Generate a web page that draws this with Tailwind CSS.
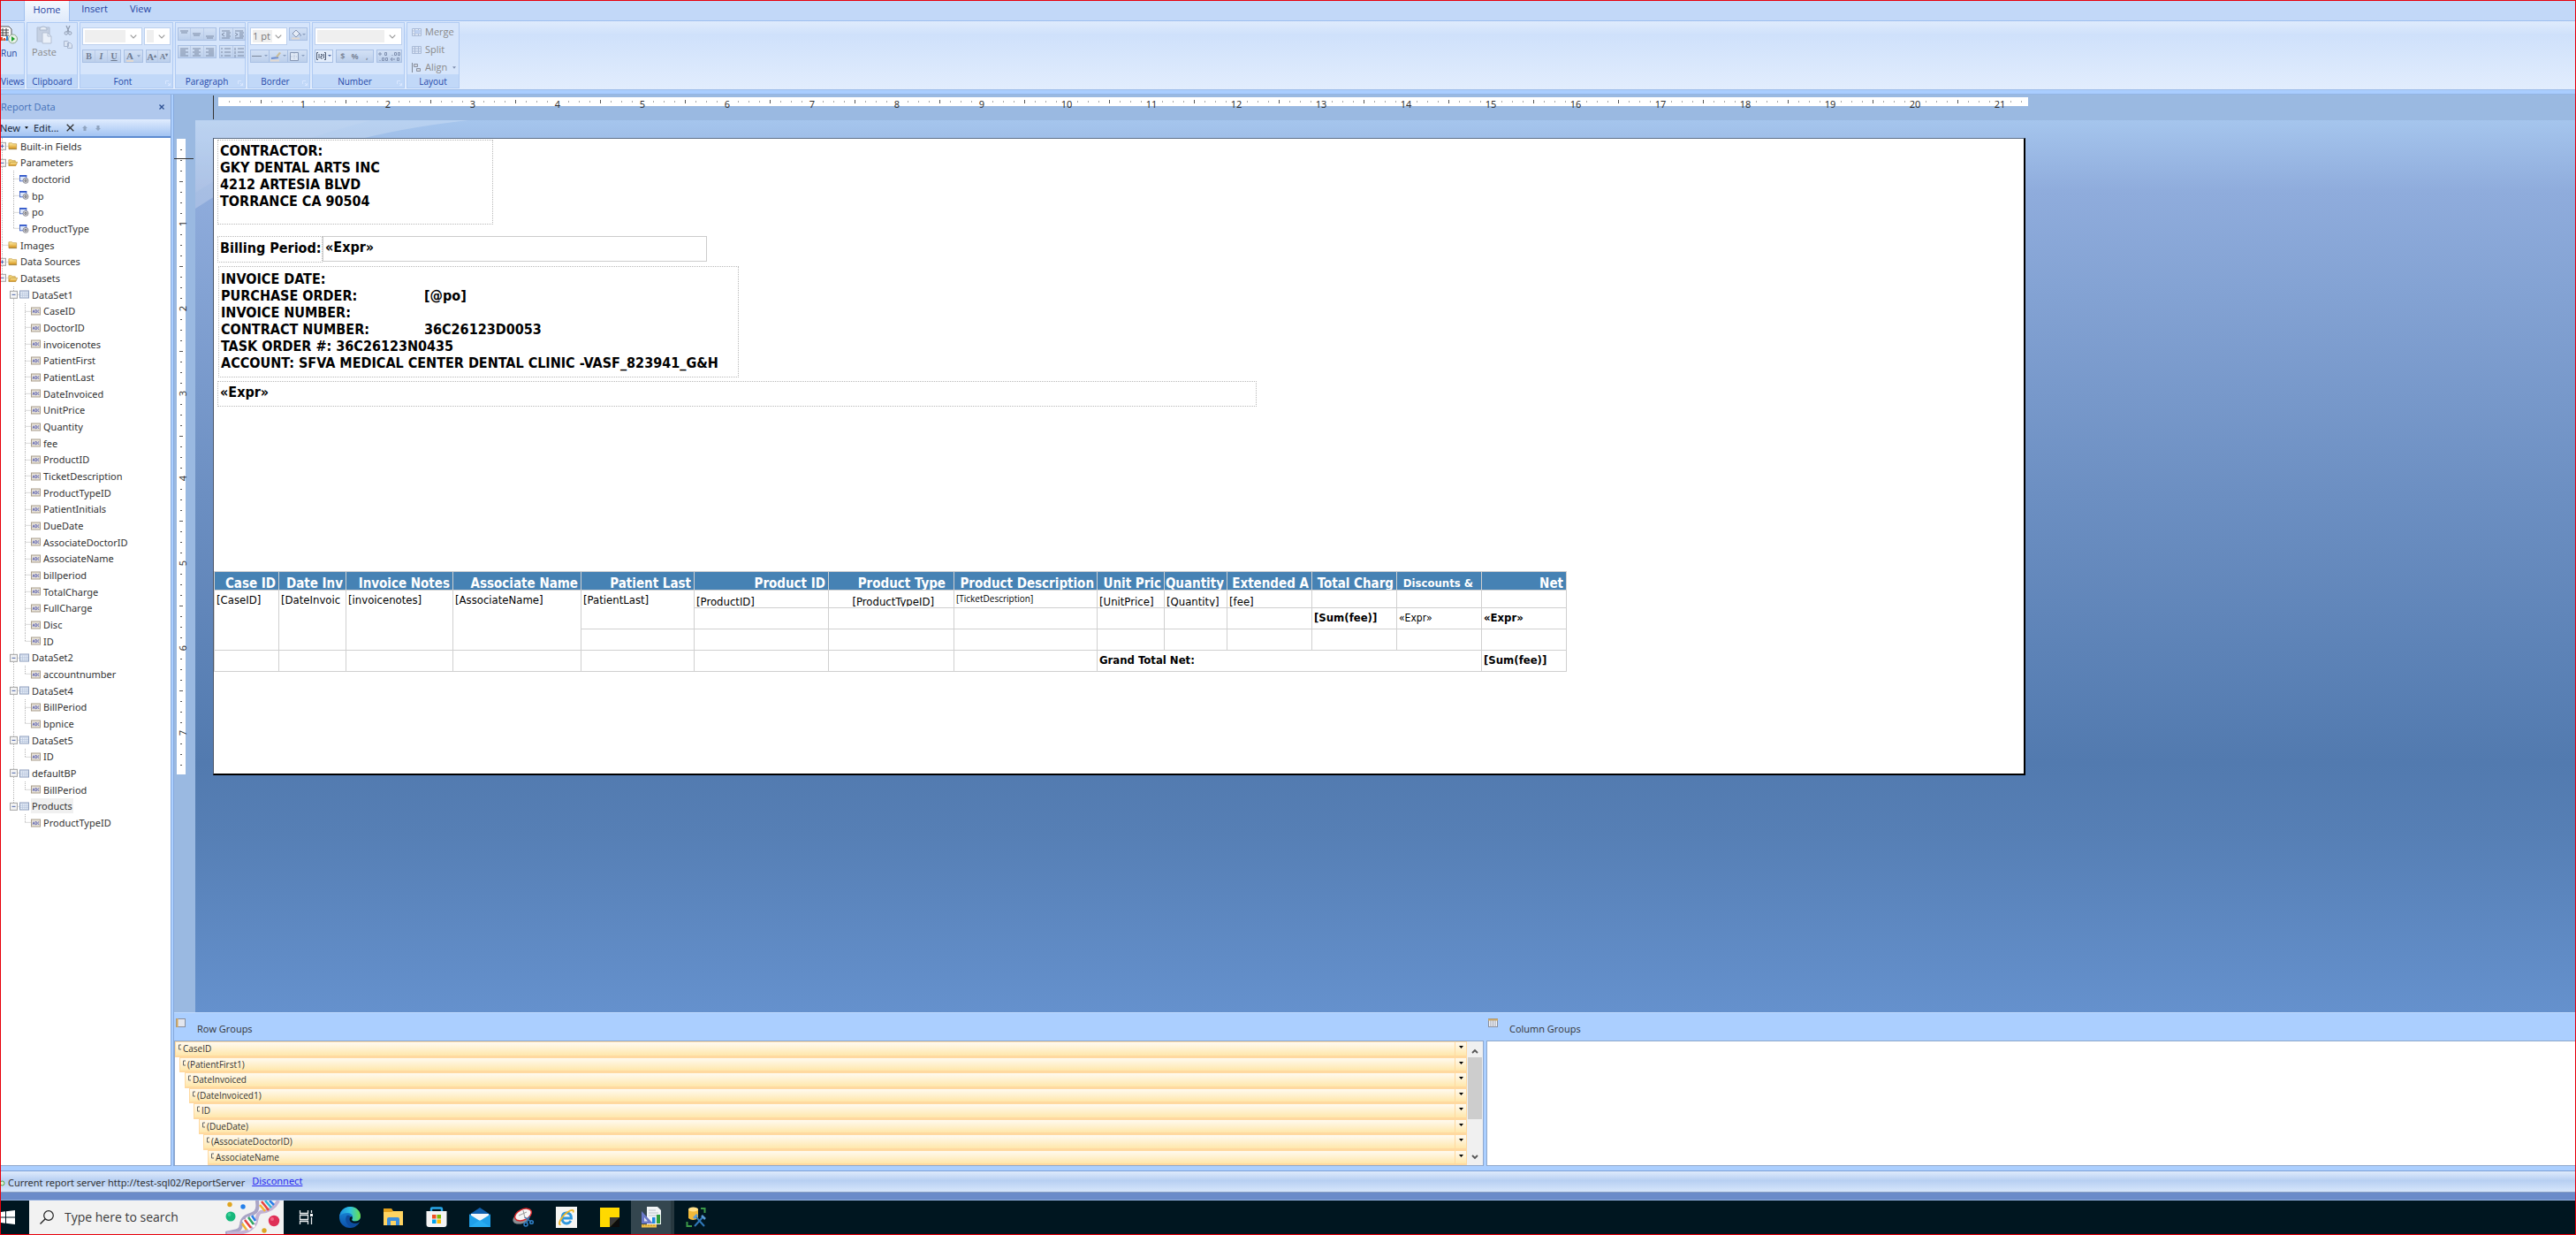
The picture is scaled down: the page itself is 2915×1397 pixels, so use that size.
<!DOCTYPE html>
<html lang="en">
<head>
    <meta charset="UTF-8">
    <meta name="viewport" content="width=device-width, initial-scale=1.0">
    <title>Report Builder</title>
    <script src="https://cdn.jsdelivr.net/npm/@tailwindcss/browser@4"></script>
</head>
<body class="h-screen flex flex-col overflow-hidden border border-red-600 bg-[#abcfff] font-['Noto_Sans','Open_Sans',sans-serif] text-[11px] leading-4 text-[#333]">

    <!-- shared icons -->
    <svg class="absolute w-0 h-0">
        <defs>
            <linearGradient id="gold" x1="0" y1="0" x2="0" y2="1"><stop offset="0" stop-color="#fff0a8"/><stop offset="1" stop-color="#d9971f"/></linearGradient>
            <linearGradient id="edgeA" x1="0" y1="0" x2="1" y2="0"><stop offset="0" stop-color="#1b8fe0"/><stop offset=".5" stop-color="#2fc3df"/><stop offset="1" stop-color="#6be04a"/></linearGradient>
            <linearGradient id="edgeB" x1="0" y1="0" x2="0" y2="1"><stop offset="0" stop-color="#1a92e0"/><stop offset="1" stop-color="#0c4fa8"/></linearGradient>
        </defs>
        <symbol id="i-folder" viewBox="0 0 12 10"><path d="M1 2.5V1.5h4l1 1h4.5v6H1z" fill="url(#gold)" stroke="#b98b2c" stroke-width=".7"/><path d="M1 9h10" stroke="#8b6a20" stroke-width=".8"/></symbol>
        <symbol id="i-open" viewBox="0 0 12 10"><path d="M1 8.5V1.5h3.5l1 1H9v2" fill="#f4d77c" stroke="#b98b2c" stroke-width=".7"/><path d="M1 8.8 3 4.3h8.6L9.6 8.8z" fill="url(#gold)" stroke="#b07f1e" stroke-width=".7"/></symbol>
        <symbol id="i-param" viewBox="0 0 12 11"><rect x=".5" y=".5" width="8" height="7" fill="#dfe9fb" stroke="#3f62c4"/><path d="M0 1h9" stroke="#2f55c8" stroke-width="2"/><circle cx="7.7" cy="7" r="3.3" fill="#d8d8dc" stroke="#70707a" stroke-width=".8"/><circle cx="7.7" cy="7" r="1.2" fill="none" stroke="#444" stroke-width=".8"/></symbol>
        <symbol id="i-set" viewBox="0 0 11 9"><rect x=".5" y=".5" width="10" height="8" fill="#e6edf7" stroke="#8b9cbb"/><path d="M.5 1.5h10M3.5 2v6M6 2v6M8.5 2v6M1 4h9M1 6h9" stroke="#b7c5dd" stroke-width=".7"/></symbol>
        <symbol id="i-field" viewBox="0 0 11 9"><rect x=".5" y=".5" width="10" height="8" fill="#e9e4da" stroke="#a99e8c"/><path d="M2 6.2l1-3 1 3M2.3 5.3h1.4M5 3v3.2h1q1-.2.9-1 0-.6-.7-.7.6-.2.5-.8Q6.500 3 6 3zM9.300 3.300q-1.500-.6-1.500 1.300t1.500 1.400" fill="none" stroke="#5a5fae" stroke-width=".8"/></symbol>
        <symbol id="i-caret" viewBox="0 0 8 5"><path d="M.7.7 4 4 7.300.7" fill="none" stroke="#9a9a9a" stroke-width="1.100"/></symbol>
        <symbol id="i-down" viewBox="0 0 5 3"><path d="M0 0h5L2.500 3z"/></symbol>
        <symbol id="i-launch" viewBox="0 0 6 6"><path d="M.5 4V.5H4M3 3l2.500 2.500M5.500 3v2.500H3" fill="none" stroke="#dbe9ff" stroke-width=".9"/></symbol>
    </svg>

    <!-- tabs -->
    <nav class="h-[23px] shrink-0 flex items-end bg-[#c2d8f8] text-[#1f3fa0] font-['Open_Sans',sans-serif]" role="tablist">
        <span class="w-[27px] h-full border-b border-r border-[#9fbfee]"></span>
        <button role="tab" aria-selected="true" class="w-[50px] h-full pb-[4px] bg-linear-to-b from-[#f4f8fe] to-[#e0ebfb]">Home</button>
        <button role="tab" class="w-[57px] h-full pb-[4px] border-b border-l border-[#9fbfee]">Insert</button>
        <button role="tab" class="w-[48px] h-full pb-[4px] border-b border-[#9fbfee]">View</button>
        <span class="flex-1 h-full border-b border-[#9fbfee]"></span>
    </nav>

    <!-- ribbon -->
    <div class="h-[78px] shrink-0 flex gap-[2px] pt-px pb-px bg-linear-to-b from-[#dfebfc] via-[#cfe1fb] via-20% to-[#e2edfd] border-b border-[#9dbce8] font-['Open_Sans',sans-serif]">
        <section class="w-[27px] flex flex-col border border-l-0 border-[#b0cbf3] bg-[#d6e5fb]">
            <button class="flex-1 flex flex-col items-start w-[19px] pt-[3px]">
                <svg class="w-[19px] h-[21px] shrink-0" viewBox="0 0 19 21"><path d="M-2 1H9l3 3v12H-2z" fill="#fff" stroke="#555"/><path d="M-1 5h10M-1 8h10M-1 11h10M2 3v9M6 3v9" stroke="#444"/><path d="M1 13v4M4 14v3" stroke="#e0552b" stroke-width="2"/><path d="M7 12v5" stroke="#2c86d8" stroke-width="2"/><circle cx="13.500" cy="15" r="5" fill="#eaf3ea" stroke="#8aa48a"/><path d="M12 12l4 3-4 3z" fill="#1f9e2c"/></svg>
                <span class="mt-[4px] text-[10px] leading-3 text-[#24479f]">Run</span>
            </button>
            <h2 class="pt-[2px] bg-[#c1d8f8] text-[#2447a8] text-[10px] leading-[13px]">Views</h2>
        </section>
        <section class="w-[58px] flex flex-col border border-[#b0cbf3] bg-[#d6e5fb]">
            <div class="flex-1 flex justify-between text-[#8a8a8a]">
                <button class="w-[38px] flex flex-col items-center pt-[3px]">
                    <svg class="w-[18px] h-[21px]" viewBox="0 0 18 21"><path d="M1 2h14v16H1z" fill="#c5d0e2" stroke="#b0bdd2"/><path d="M4 3q4-4 8 0v2H4z" fill="#e6ecf5" stroke="#a9b6cb"/><path d="M7 8h6l4 4v8H7z" fill="#eaf0f9" stroke="#b4c0d4"/><path d="M13 8v4h4" fill="none" stroke="#b4c0d4"/></svg>
                    <span class="mt-px">Paste</span>
                </button>
                <div class="flex flex-col gap-[6px] pt-[3px] pr-[5px]">
                    <button aria-label="Cut"><svg class="w-[10px] h-[11px]" viewBox="0 0 10 11"><path d="M3 0l3 7M7 0L4 7" stroke="#8d99ae" stroke-width="1.200"/><circle cx="2.800" cy="8.500" r="1.700" fill="none" stroke="#8d99ae"/><circle cx="7.200" cy="8.500" r="1.700" fill="none" stroke="#8d99ae"/></svg></button>
                    <button aria-label="Copy"><svg class="w-[10px] h-[9px]" viewBox="0 0 10 9"><path d="M.5.500h4l1 1v5h-5zM4.500 2.500h3l2 2v4h-5z" fill="#dbe5f4" stroke="#a8b6cf"/></svg></button>
                </div>
            </div>
            <h2 class="pt-[2px] bg-[#c1d8f8] text-[#2447a8] text-center text-[10px] leading-[13px]">Clipboard</h2>
        </section>
        <section class="w-[106px] flex flex-col border border-[#b0cbf3] bg-[#d6e5fb]">
            <div class="flex-1 px-[2px] pt-[5px] flex flex-col gap-[5px]">
                <div class="flex gap-[2px]">
                    <label class="w-[69px] h-[20px] p-[2px] flex items-center justify-between border border-[#bcd0ee] bg-white"><select aria-label="Font" class="appearance-none w-[46px] h-full bg-[#efefef]"></select><svg class="w-2 h-[5px] mr-[3px]"><use href="#i-caret"/></svg></label>
                    <label class="w-[30px] h-[20px] p-[2px] flex items-center justify-between border border-[#bcd0ee] bg-white"><select aria-label="Font size" class="appearance-none w-2 h-full bg-[#efefef]"></select><svg class="w-2 h-[5px] mr-[3px]"><use href="#i-caret"/></svg></label>
                </div>
                <div class="flex gap-[3px] font-['Liberation_Serif',serif] text-[#6f7b90] leading-3">
                    <div class="w-[45px] h-[15px] grid grid-cols-3 divide-x divide-[#b9cbe8] border border-[#a9c0e4] bg-linear-to-b from-[#d3e1f5] to-[#bccfeb] text-[10px]"><button class="font-bold">B</button><button class="italic font-bold">I</button><button class="underline font-bold">U</button></div>
                    <button class="w-[22px] h-[15px] flex items-center justify-around border border-[#a9c0e4] bg-linear-to-b from-[#d3e1f5] to-[#bccfeb]"><span class="border-b-2 border-[#e3d9cf] leading-[10px] font-bold">A</span><svg class="w-[4px] h-[3px] fill-[#8ba0c2]"><use href="#i-down"/></svg></button>
                    <div class="w-[29px] h-[15px] grid grid-cols-2 divide-x divide-[#b9cbe8] border border-[#a9c0e4] bg-linear-to-b from-[#d3e1f5] to-[#bccfeb] font-bold"><button class="text-[11px]">A<sup class="text-[6px]">▴</sup></button><button class="text-[9px]">A<sup class="text-[6px]">▾</sup></button></div>
                </div>
            </div>
            <h2 class="relative pt-[2px] pr-2 bg-[#c1d8f8] text-[#2447a8] text-center text-[10px] leading-[13px]">Font<svg class="absolute right-[2px] bottom-[2px] w-[6px] h-[6px]"><use href="#i-launch"/></svg></h2>
        </section>
        <section class="w-[80px] flex flex-col border border-[#b0cbf3] bg-[#d6e5fb]">
            <div class="flex-1 px-[2px] pt-[5px] grid grid-cols-[44px_30px] content-start gap-x-[3px] gap-y-[5px]" id="paragraph"></div>
            <h2 class="relative pt-[2px] pr-2 bg-[#c1d8f8] text-[#2447a8] text-center text-[10px] leading-[13px]">Paragraph<svg class="absolute right-[2px] bottom-[2px] w-[6px] h-[6px]"><use href="#i-launch"/></svg></h2>
        </section>
        <section class="w-[71px] flex flex-col border border-[#b0cbf3] bg-[#d6e5fb]">
            <div class="flex-1 px-[2px] pt-[5px] flex flex-col gap-[5px]">
                <div class="flex gap-[2px]">
                    <label class="w-[42px] h-[20px] p-[2px] flex items-center justify-between border border-[#bcd0ee] bg-white"><select aria-label="Border width" class="appearance-none w-[22px] h-full bg-[#efefef] text-[#777] leading-3"><option>1 pt</option></select><svg class="w-2 h-[5px] mr-[3px]"><use href="#i-caret"/></svg></label>
                    <button aria-label="Fill" class="w-[21px] h-[15px] border border-[#a9c0e4] bg-linear-to-b from-[#d3e1f5] to-[#bccfeb]"><svg class="w-[19px] h-[13px]" viewBox="0 0 19 13"><path d="M3 6l4-4 4 4-4 4z" fill="#e6edf7" stroke="#8696b3"/><path d="M11 6q2 1 1 3" fill="none" stroke="#7d90b5"/><path d="M2 11.500h9" stroke="#e3d9cf" stroke-width="2"/><path d="M14 6h4l-2 2z" fill="#8ba0c2"/></svg></button>
                </div>
                <div class="w-[65px] h-[15px] grid grid-cols-3 divide-x divide-[#a9c0e4] border border-[#a9c0e4] bg-linear-to-b from-[#d3e1f5] to-[#bccfeb]">
                    <button aria-label="Border style"><svg class="w-[20px] h-[13px]" viewBox="0 0 20 13"><path d="M1 6.500h11" stroke="#7d889b"/><path d="M15 5h4l-2 2z" fill="#8ba0c2"/></svg></button>
                    <button aria-label="Border color"><svg class="w-[20px] h-[13px]" viewBox="0 0 20 13"><path d="M2 9l8-1" stroke="#6f8fd0" stroke-width="2"/><path d="M7 7l4-5 2 1-4 5z" fill="#c9bd9a"/><path d="M1 11.500h10" stroke="#e3d9cf" stroke-width="2"/><path d="M15 5h4l-2 2z" fill="#8ba0c2"/></svg></button>
                    <button aria-label="Borders"><svg class="w-[20px] h-[13px]" viewBox="0 0 20 13"><path d="M2.500 2.500h9v9h-9z" fill="#dfe8f5" stroke="#8696b3"/><path d="M7 3v8M3 7h8" stroke="#b5c2d8" stroke-dasharray="1 1"/><path d="M15 5h4l-2 2z" fill="#8ba0c2"/></svg></button>
                </div>
            </div>
            <h2 class="relative pt-[2px] pr-2 bg-[#c1d8f8] text-[#2447a8] text-center text-[10px] leading-[13px]">Border<svg class="absolute right-[2px] bottom-[2px] w-[6px] h-[6px]"><use href="#i-launch"/></svg></h2>
        </section>
        <section class="w-[105px] flex flex-col border border-[#b0cbf3] bg-[#d6e5fb]">
            <div class="flex-1 px-[2px] pt-[5px] flex flex-col gap-[5px]">
                <label class="w-[99px] h-[20px] p-[2px] flex items-center justify-between border border-[#bcd0ee] bg-white"><select aria-label="Number format" class="appearance-none w-[76px] h-full bg-[#efefef]"></select><svg class="w-2 h-[5px] mr-[4px]"><use href="#i-caret"/></svg></label>
                <div class="flex gap-[3px] text-[9px] leading-3 text-[#7d889b] font-bold">
                    <button aria-label="Placeholder" class="w-[21px] h-[15px] border border-[#a9c0e4] bg-[#e3edfb]"><svg class="w-[19px] h-[13px]" viewBox="0 0 19 13"><path d="M3 2.500H1.500v8H3M10 2.500h1.500v8H10M4 4v5M6 4.500h1.500v2H6V9h2M9.500 4v5" fill="none" stroke="#4c5a72"/><path d="M14 5h4l-2 2z" fill="#4c66a0"/></svg></button>
                    <div class="w-[43px] h-[15px] grid grid-cols-3 border border-[#a9c0e4] bg-linear-to-b from-[#d3e1f5] to-[#bccfeb]"><button>$</button><button>%</button><button>,</button></div>
                    <div class="w-[29px] h-[15px] grid grid-cols-2 items-center border border-[#a9c0e4] bg-linear-to-b from-[#d3e1f5] to-[#bccfeb]"><button aria-label="Increase decimals"><svg class="w-[13px] h-[12px]" viewBox="0 0 13 12"><path d="M1 3h4M3 1v4M8.500 1.500h2v3h-2zM5.500 7.500h2v3h-2zM9.500 7.500h2v3h-2zM3 10v1" fill="none" stroke="#8090b0"/></svg></button><button aria-label="Decrease decimals"><svg class="w-[13px] h-[12px]" viewBox="0 0 13 12"><path d="M5.500 1.500h2v3h-2zM9.500 1.500h2v3h-2zM3 4v1M8.500 7.500h2v3h-2zM1 9h5M3 7L1 9l2 2" fill="none" stroke="#8090b0"/></svg></button></div>
                </div>
            </div>
            <h2 class="relative pt-[2px] pr-2 bg-[#c1d8f8] text-[#2447a8] text-center text-[10px] leading-[13px]">Number<svg class="absolute right-[2px] bottom-[2px] w-[6px] h-[6px]"><use href="#i-launch"/></svg></h2>
        </section>
        <section class="w-[60px] flex flex-col border border-[#b0cbf3] bg-[#d6e5fb]">
            <div class="flex-1 pl-[5px] pt-[2px] flex flex-col gap-1 items-start text-[#8a8a8a]">
                <button class="flex items-center gap-1"><svg class="w-[11px] h-[9px]" viewBox="0 0 11 9"><path d="M.5.500h10v8H.5zM.5 3h10M.5 6h10M3.500 0v9M7.500 0v9" fill="#e6edf8" stroke="#a9bad6"/><path d="M3.500 2h6v4h-6z" fill="#bdd0f0"/></svg>Merge</button>
                <button class="flex items-center gap-1"><svg class="w-[11px] h-[9px]" viewBox="0 0 11 9"><path d="M.5.500h10v8H.5zM.5 3h10M.5 6h10M3.500 0v9M7.500 0v9" fill="#dbe6f8" stroke="#a9bad6"/></svg>Split</button>
                <button class="flex items-center gap-1"><svg class="w-[11px] h-[11px]" viewBox="0 0 11 11"><path d="M.5 0v11" stroke="#7f8896"/><path d="M2.500 1.500h4v3h-4zM5.500 6.500h4v3h-4z" fill="#cfd5df" stroke="#8b93a2"/></svg>Align<svg class="w-[4px] h-[3px] ml-[2px] fill-[#8090b0]"><use href="#i-down"/></svg></button>
            </div>
            <h2 class="pt-[2px] bg-[#c1d8f8] text-[#2447a8] text-center text-[10px] leading-[13px]">Layout</h2>
        </section>
    </div>
    <div class="h-[5px] shrink-0 bg-[#a9cdff] border-b border-[#93b5e4]"></div>

    <main class="flex-1 min-h-0 flex pb-[5px]">
        <!-- report data -->
        <aside class="w-[192px] shrink-0 flex flex-col bg-white border-b border-[#8fa8cc]">
            <header class="h-[28px] flex items-center justify-between pr-[7px] bg-[#b0c8ed] text-[#4470b8] font-['Open_Sans',sans-serif]">
                <h1>Report Data</h1>
                <button aria-label="Close"><svg class="w-[6px] h-[6px]" viewBox="0 0 6 6"><path d="M.5.500l5 5M5.500.500l-5 5" stroke="#2c4f92" stroke-width="1.300"/></svg></button>
            </header>
            <div class="h-[21px] flex items-center border-b-2 border-[#5d8bd0] bg-linear-to-b from-[#e0ecfe] to-[#a2c3f2] text-[#1c2b40]">
                <button class="flex items-center gap-[5px] -ml-px">New<svg class="w-[4px] h-[3px]"><use href="#i-down"/></svg></button>
                <button class="ml-[6px]">Edit...</button>
                <button aria-label="Delete" class="ml-[8px]"><svg class="w-[9px] h-[9px]" viewBox="0 0 9 9"><path d="M.7.700l7.600 7.600M8.300.700L.7 8.300" stroke="#333" stroke-width="1.300"/></svg></button>
                <button aria-label="Move up" class="ml-[9px]"><svg class="w-[6px] h-[6px]" viewBox="0 0 6 6"><path d="M3 0l3 3H4.500v3h-3V3H0z" fill="#8fa3bf"/></svg></button>
                <button aria-label="Move down" class="ml-[9px]"><svg class="w-[6px] h-[6px]" viewBox="0 0 6 6"><path d="M3 6l3-3H4.500V0h-3v3H0z" fill="#8fa3bf"/></svg></button>
            </div>
            <ul id="tree" class="h-[784px] grid grid-rows-[repeat(42,minmax(0,1fr))]"></ul>
        </aside>
        <div class="w-[4px] shrink-0 border-x border-[#86a9dc] bg-[#abcfff]"></div>

        <div class="flex-1 min-w-0 flex flex-col">
            <!-- design surface -->
            <div class="flex-1 min-h-0 flex flex-col bg-[#9ab9e1]">
                <div class="h-[29px] shrink-0 pl-[50px] pt-[3px]"><svg id="hruler" class="w-[2048px] h-[10px] bg-white overflow-visible text-[11px] fill-[#333]"></svg></div>
                <div class="flex-1 min-h-0 flex">
                    <div class="w-[24px] shrink-0 pt-[21px] pl-[3px]"><svg id="vruler" class="w-[10px] h-[719px] bg-white overflow-visible text-[11px] fill-[#333]"></svg></div>
                    <div class="relative flex-1 min-w-0 overflow-hidden pt-[20px] pl-[20px] bg-[linear-gradient(180deg,#a5c5ed_0%,#8facdc_8%,#6c8fc2_42%,#527aaf_72%,#567fb5_80%,#6591cd_100%)]">
                        <svg class="absolute left-0 top-0 w-[320px] h-[110px]" viewBox="0 0 320 110"><path d="M0 0H310Q120 20 0 100z" fill="#fff" fill-opacity=".22"/><path d="M0 0H200Q80 30 0 82z" fill="#fff" fill-opacity=".06"/></svg>
                        <article class="relative w-[2051px] h-[721px] border-t border-l border-r-2 border-b-2 border-t-[#5c6f88] border-l-[#4a5568] border-r-black border-b-black bg-white text-black text-[16px] leading-[19px] font-bold font-['DejaVu_Sans_Condensed','DejaVu_Sans',sans-serif]">
                            <div class="ml-[4px] mt-px w-[312px] h-[96px] pl-[2px] pt-[2px] border border-dotted border-[#b8b8b8]">
                                CONTRACTOR:<br>GKY DENTAL ARTS INC<br>4212 ARTESIA BLVD<br>TORRANCE CA 90504
                            </div>
                            <div class="ml-[4px] mt-[13px] flex items-start">
                                <div class="w-[119px] h-[30px] pl-[2px] pt-[3px] border border-dotted border-[#b8b8b8] whitespace-nowrap">Billing Period:</div>
                                <div class="w-[435px] h-[29px] pl-[2px] pt-[2px] border border-[#cccccc]">«Expr»</div>
                            </div>
                            <div class="ml-[5px] mt-[4px] w-[589px] h-[126px] pl-[2px] pt-[4px] border border-dotted border-[#b8b8b8] whitespace-nowrap">
                                <p>INVOICE DATE:</p>
                                <p class="flex"><span class="w-[230px]">PURCHASE ORDER:</span>[@po]</p>
                                <p>INVOICE NUMBER:</p>
                                <p class="flex"><span class="w-[230px]">CONTRACT NUMBER:</span>36C26123D0053</p>
                                <p>TASK ORDER #: 36C26123N0435</p>
                                <p>ACCOUNT: SFVA MEDICAL CENTER DENTAL CLINIC -VASF_823941_G&amp;H</p>
                            </div>
                            <div class="ml-[4px] mt-[4px] w-[1176px] h-[29px] pl-[2px] pt-[2px] border border-dotted border-[#b8b8b8]">«Expr»</div>

                            <table class="mt-[186px] w-[1531px] table-fixed border-collapse text-[13px] leading-4 font-normal whitespace-nowrap [&_td]:border [&_td]:border-[#d0d0d0] [&_td]:p-0 [&_td]:pl-[2px] [&_td]:align-top [&_td]:overflow-hidden [&_th]:border [&_th]:border-[#d0d0d0] [&_th]:p-0 [&_th]:text-right">
                                <colgroup>
                                    <col class="w-[73px]"><col class="w-[76px]"><col class="w-[121px]"><col class="w-[145px]"><col class="w-[128px]"><col class="w-[152px]"><col class="w-[142px]"><col class="w-[162px]"><col class="w-[76px]"><col class="w-[71px]"><col class="w-[96px]"><col class="w-[96px]"><col class="w-[96px]"><col class="w-[96px]">
                                </colgroup>
                                <thead>
                                    <tr id="heads" class="h-[21px] bg-[#4682b4] text-white text-[15px]"></tr>
                                </thead>
                                <tbody>
                                    <tr class="h-[20px]">
                                        <td rowspan="3"><div class="pt-[3px]">[CaseID]</div></td>
                                        <td rowspan="3"><div class="pt-[3px] mr-[3px] overflow-hidden">[DateInvoic</div></td>
                                        <td rowspan="3"><div class="pt-[3px]">[invoicenotes]</div></td>
                                        <td rowspan="3"><div class="pt-[3px]">[AssociateName]</div></td>
                                        <td rowspan="2"><div class="pt-[3px]">[PatientLast]</div></td>
                                        <td><div class="h-[13px] mt-[5px] overflow-hidden leading-[15px]">[ProductID]</div></td>
                                        <td><div class="h-[13px] mt-[5px] overflow-hidden leading-[15px] text-right pr-[22px]">[ProductTypeID]</div></td>
                                        <td><div class="h-[17px] pt-[2px] text-[10px] leading-[15px] font-['Open_Sans',sans-serif]">[TicketDescription]</div></td>
                                        <td><div class="h-[13px] mt-[5px] overflow-hidden leading-[15px]">[UnitPrice]</div></td>
                                        <td><div class="h-[13px] mt-[5px] overflow-hidden leading-[15px]">[Quantity]</div></td>
                                        <td><div class="h-[13px] mt-[5px] overflow-hidden leading-[15px]">[fee]</div></td>
                                        <td></td><td></td><td></td>
                                    </tr>
                                    <tr class="h-[24px]">
                                        <td></td><td></td><td></td><td></td><td></td><td></td>
                                        <td class="font-bold"><div class="pt-[3px]">[Sum(fee)]</div></td>
                                        <td class="text-[12px]"><div class="pt-[3px]">«Expr»</div></td>
                                        <td class="font-bold"><div class="pt-[3px]">«Expr»</div></td>
                                    </tr>
                                    <tr class="h-[24px]"><td></td><td></td><td></td><td></td><td></td><td></td><td></td><td></td><td></td><td></td></tr>
                                    <tr class="h-[24px]">
                                        <td></td><td></td><td></td><td></td><td></td><td></td><td></td><td></td>
                                        <td colspan="5" class="font-bold"><div class="pt-[3px]">Grand Total Net:</div></td>
                                        <td class="font-bold"><div class="pt-[3px]">[Sum(fee)]</div></td>
                                    </tr>
                                </tbody>
                            </table>
                        </article>
                    </div>
                </div>
            </div>

            <!-- grouping pane -->
            <div class="h-[174px] shrink-0 flex gap-[3px] border-t border-[#c0dbff] font-['Open_Sans',sans-serif]">
                <section class="w-[1482px] shrink-0 flex flex-col">
                    <header class="h-[31px] flex items-center gap-[13px] pl-[2px] text-[#333]"><svg class="w-[11px] h-[10px] -mt-[10px]" viewBox="0 0 11 10"><rect x=".5" y=".5" width="10" height="9" fill="#e3e6ee" stroke="#8a8f9c"/><path d="M1.500 0v10" stroke="#d0a860" stroke-width="2"/></svg><h2 class="pt-[5px]">Row Groups</h2></header>
                    <div class="flex-1 min-h-0 flex border border-[#8fa8cc] bg-white">
                        <ul id="groups" class="flex-1 h-full overflow-hidden grid auto-rows-[minmax(0,1fr)] text-[10px] leading-3"></ul>
                        <div class="w-[18px] flex flex-col items-center bg-[#f0f0f0]">
                            <svg class="w-[8px] h-[18px]" viewBox="0 0 8 18"><path d="M1 13l3-3 3 3" fill="none" stroke="#555" stroke-width="1.800"/></svg>
                            <div class="w-[16px] h-[70px] bg-[#cdcdcd]"></div>
                            <svg class="w-[8px] h-[18px] mt-auto" viewBox="0 0 8 18"><path d="M1 7l3 3 3-3" fill="none" stroke="#555" stroke-width="1.800"/></svg>
                        </div>
                    </div>
                </section>
                <section class="flex-1 flex flex-col">
                    <header class="h-[31px] flex items-center gap-[13px] pl-[2px] text-[#333]"><svg class="w-[11px] h-[10px] -mt-[10px]" viewBox="0 0 11 10"><rect x=".5" y=".5" width="10" height="9" fill="#f3f4f8" stroke="#8a8f9c"/><path d="M0 1.500h11" stroke="#d0a860" stroke-width="2"/><path d="M3 2v8M5.500 2v8M8 2v8" stroke="#9aa0ae"/></svg><h2 class="pt-[5px]">Column Groups</h2></header>
                    <div class="flex-1 border border-r-0 border-[#8fa8cc] bg-white"></div>
                </section>
            </div>
        </div>
    </main>

    <footer class="h-[25px] shrink-0 flex items-center border-y border-t-[#7da0d6] border-b-[#8aa0c4] bg-linear-to-b from-[#dfebfc] via-[#b7cff2] via-45% to-[#d6e6fb]">
        <svg class="w-[5px] h-[7px] mt-1" viewBox="0 0 5 7"><circle cx="1.500" cy="3.500" r="2.500" fill="#d9efd2" stroke="#4f9c4a"/></svg>
        <span class="ml-[3px] pt-[2px]">Current report server http://test-sql02/ReportServer</span>
        <a href="#" class="ml-[8px] -mt-[2px] underline text-[#2a2af0]">Disconnect</a>
    </footer>
    <div class="h-[9px] shrink-0 bg-[#6a8bc9] border-b border-[#93afe0]"></div>

    <!-- taskbar -->
    <div class="h-[38px] shrink-0 flex bg-[#001620]">
        <button aria-label="Start" class="w-[32px]"><svg class="w-[16px] h-[16px]" viewBox="0 0 16 16"><path d="M0 2l5-.7v6.200H0zM6 1.200L16 0v7.500H6zM0 8.500h5v6.200L0 14zM6 8.500h10V16l-10-1.200z" fill="#fff"/></svg></button>
        <label class="w-[288px] flex items-center bg-[#f2f2f2] pl-3 font-['Open_Sans',sans-serif]">
            <svg class="w-[16px] h-[16px]" viewBox="0 0 16 16"><circle cx="10" cy="6" r="5.300" fill="none" stroke="#222" stroke-width="1.200"/><path d="M6.200 9.800L.5 15.500" stroke="#222" stroke-width="1.300"/></svg>
            <input type="text" aria-label="Search" placeholder="Type here to search" class="flex-1 min-w-0 ml-3 text-[14px] leading-5 placeholder:text-[#3a3a3a] outline-none">
            <svg class="w-[66px] h-[38px] shrink-0" viewBox="0 0 66 38">
                <path d="M0 37C14 34 17 35 18 27 19 16 28 18 34 13 38 9 36 5 36 0" fill="none" stroke="#a9a4c6" stroke-width="4"/>
                <path d="M2 37C22 38 28 34 33 28 37 23 34 16 40 13 50 12 56 8 60 0" fill="none" stroke="#c3b3d4" stroke-width="4"/>
                <path d="M20 22l8 11M24 19l9 11M29 17l5 8" stroke="#fff" stroke-width="3"/>
                <path d="M19 26l5 7" stroke="#f2b632" stroke-width="2.500"/><path d="M22 22l7 9" stroke="#e8413c" stroke-width="2.500"/><path d="M26 19l6 8" stroke="#2da562" stroke-width="2.500"/><path d="M30 17l4 6" stroke="#2b7de9" stroke-width="2.500"/>
                <path d="M39 5l6 7" stroke="#f2b632" stroke-width="2.500"/><path d="M41 1l8 10" stroke="#e8413c" stroke-width="2.500"/><path d="M45 0l7 8" stroke="#2bb8d8" stroke-width="2.500"/><path d="M50 0l5 5" stroke="#2b7de9" stroke-width="2.500"/>
                <circle cx="6" cy="18" r="5.500" fill="#16b87c"/><circle cx="5" cy="4.500" r="2.700" fill="#e0a520"/><circle cx="20" cy="7" r="2.700" fill="#2580ea"/><circle cx="55" cy="23" r="6.200" fill="#df2f56"/><circle cx="44" cy="34" r="2.700" fill="#dba624"/>
                <circle cx="4.500" cy="16" r="2" fill="#5be0ac" fill-opacity=".6"/><circle cx="53" cy="21" r="2" fill="#ff8ba4" fill-opacity=".6"/>
            </svg>
        </label>
        <button aria-label="Task View" class="w-[50px] grid place-items-center"><svg class="w-[16px] h-[16px]" viewBox="0 0 16 16"><path d="M1.500 0v3.500h9V0M1.500 5.500h9v5h-9zM1.500 16v-3.500h9V16M14.500 0v3M14.500 8v8" fill="none" stroke="#e6eaec" stroke-width="1.300"/><path d="M13 4h3v3h-3z" fill="#fff"/></svg></button>
        <button aria-label="Edge" class="w-[49px] grid place-items-center"><svg class="w-[24px] h-[24px]" viewBox="0 0 24 24"><circle cx="12" cy="12" r="12" fill="url(#edgeB)"/><path d="M.3 10.500C1.500 4 6.500 0 12.500 0 19 0 24 5 24 10.500c0 4-3 6-6 6-3.500 0-4.500-1.500-3.500-2.800 2-2.700-.5-6.700-5-6.700-4 0-7.500 1.500-9.200 3.500z" fill="url(#edgeA)"/><path d="M8.500 10c-3 4-1 11 5.500 13 3.500-.2 7-2.500 8.500-5-6 2.500-11 0-11-4 0-1.500.5-2.500 1-3-1.500-1.500-3-1.500-4-1z" fill="#0d4c9e"/><path d="M11.500 14c0-2 1.200-3 2.500-3 1 1 1 2 .4 3-.8 1.500.5 2.600 3.600 2.600 2.500 0 5-1.200 6-3.600v3c-.8 1.500-2.500 2.500-4.500 2.800-5 .5-8-1.800-8-4.800z" fill="#001620"/></svg></button>
        <button aria-label="File Explorer" class="w-[49px] grid place-items-center"><svg class="w-[22px] h-[20px]" viewBox="0 0 22 20"><path d="M0 0h9l2 3v3H0z" fill="#e2a01c"/><path d="M0 4h9l2-1h11v16H0z" fill="#ffd461"/><path d="M4 19v-7q0-2 2-2h10q2 0 2 2v7h-4v-5H8v5z" fill="#3b8ede"/></svg></button>
        <button aria-label="Store" class="w-[49px] grid place-items-center"><svg class="w-[24px] h-[24px]" viewBox="0 0 24 24"><path d="M6 6V2.500Q6 1.500 7 1.500h10q1 0 1 1V6" fill="none" stroke="#28a8ea" stroke-width="2.400"/><path d="M.5 5h23v15q0 3-3 3h-17q-3 0-3-3z" fill="#f4f4f4"/><path d="M7 9h4.500v4.500H7z" fill="#f25022"/><path d="M12.500 9H17v4.500h-4.500z" fill="#7fba00"/><path d="M7 14.500h4.500V19H7z" fill="#00a4ef"/><path d="M12.500 14.500H17V19h-4.500z" fill="#ffb900"/></svg></button>
        <button aria-label="Mail" class="w-[49px] grid place-items-center"><svg class="w-[24px] h-[22px]" viewBox="0 0 24 22"><path d="M0 8l12-8 12 8v5H0z" fill="#0f5fae"/><path d="M2 7h20v9H2z" fill="#f3f6fa"/><path d="M0 7.500L12 15l12-7.500V22H0z" fill="#1f9fe8"/><path d="M0 22l12-8 12 8z" fill="#2fb7f5" fill-opacity=".55"/></svg></button>
        <button aria-label="Snipping Tool" class="w-[49px] grid place-items-center"><svg class="w-[24px] h-[24px]" viewBox="0 0 24 24"><ellipse cx="10" cy="13" rx="10" ry="6" fill="#8b8f94" transform="rotate(-20 10 13)"/><ellipse cx="12" cy="9" rx="10" ry="6" fill="#f6f6f6" stroke="#d8282c" stroke-width="1.500" transform="rotate(-25 12 9)"/><path d="M7 10l9-4M12 4l2 9" stroke="#999"/><path d="M14 12l7 5M19 11l-3 7" stroke="#2f77b8" stroke-width="1.500"/><circle cx="15" cy="20" r="2" fill="none" stroke="#2f7fc6" stroke-width="1.500"/><circle cx="21.500" cy="17.500" r="1.800" fill="none" stroke="#2f7fc6" stroke-width="1.500"/></svg></button>
        <button aria-label="Internet Explorer" class="w-[49px] grid place-items-center"><svg class="w-[24px] h-[24px]" viewBox="0 0 24 24"><path d="M0 0h24v24H0z" fill="#f5f5f3"/><path d="M17 16q-2 3-5 3-5-.500-5-6.500T12.500 7q5 .500 5 6H8" fill="none" stroke="#2f97dd" stroke-width="2.800"/><path d="M5.500 20q-3 .500-.500-4.500Q9 8 16 4.500q5-2 3.500 2" fill="none" stroke="#ecb528" stroke-width="1.800"/></svg></button>
        <button aria-label="Sticky Notes" class="w-[49px] grid place-items-center"><svg class="w-[22px] h-[22px]" viewBox="0 0 22 22"><path d="M0 0h22v11L11 22H0z" fill="#ffd900"/><path d="M11 22V11h11z" fill="#3b3a39"/><path d="M11 22L22 11v11z" fill="#0c0c0c"/></svg></button>
        <button aria-label="Report Builder" class="w-[49px] grid place-items-center bg-[#34464f] border-r-4 border-[#27383f]"><svg class="w-[24px] h-[24px]" viewBox="0 0 24 24"><path d="M7 0h12l4 4v16H7z" fill="#f2f4f6"/><path d="M9 4h8M9 7h11M9 10h11" stroke="#b9c0c8"/><path d="M1 5v14h13z" fill="#6a78c8"/><path d="M4 12v4.500h4z" fill="#dfe3f5"/><path d="M13 12h3.500v7H13z" fill="#1f88e0"/><path d="M18 9h4v10h-4z" fill="#2c9c3a"/><path d="M1 20h17v3.500H1z" fill="#f0c04a"/><path d="M3 20v2M6 20v2M9 20v2M12 20v2M15 20v2" stroke="#9c741c" stroke-width=".7"/></svg></button>
        <button aria-label="SQL Server Management Studio" class="w-[49px] grid place-items-center"><svg class="w-[24px] h-[24px]" viewBox="0 0 24 24"><path d="M17 2h4.500v5M1.500 17v5H7" fill="none" stroke="#3c9a48" stroke-width="2"/><path d="M3 3v10q5 4 11 0V3z" fill="#f0b93a"/><ellipse cx="8.500" cy="3" rx="5.500" ry="2.500" fill="#ffe08a"/><path d="M11 11l10 11M20 11L10 22" stroke="#2f77b8" stroke-width="2"/><path d="M9 13l4-4M18 10l4 4" stroke="#5a9bd6" stroke-width="2.500"/></svg></button>
    </div>

    <script>
        // table headings: right aligned, clipped by the cell
        const heads = document.getElementById('heads');
        [['Case ID'], ['Date Inv'], ['Invoice Notes'], ['Associate Name'], ['Patient Last'], ['Product ID'], ['Product Type', 'pr-[6px]'],
         ['Product Description'], ['Unit Pric'], ['Quantity'], ['Extended A'], ['Total Charg'], ['Discounts &amp;', 'pr-[6px] text-[13px]'], ['Net']].forEach(([text, extra]) => {
            heads.innerHTML += `<th scope="col"><div class="h-[16px] mt-[4px] mr-[3px] leading-[18px] overflow-hidden ${extra || ''}">${text}</div></th>`;
        });

        // paragraph buttons: each path is drawn in a 13x12 box
        const paragraph = [
            [['Top', 'M2 2h9M3 4h7'], ['Middle', 'M2 5h9M3 7h7'], ['Bottom', 'M2 8h9M3 10h7']],
            [['Decrease indent', 'M2 2h9M7 4h5M7 6h4M7 8h5M2 10h9M5 4L2 6l3 2'], ['Increase indent', 'M2 2h9M7 4h5M7 6h4M7 8h5M2 10h9M2 4l3 2-3 2']],
            [['Left', 'M2 2h9M2 4h6M2 6h9M2 8h6M2 10h9'], ['Center', 'M2 2h9M4 4h5M2 6h9M4 8h5M2 10h9'], ['Right', 'M2 2h9M5 4h6M2 6h9M5 8h6M2 10h9']],
            [['Bullets', 'M1 2h2M5 2h7M1 6h2M5 6h7M1 10h2M5 10h7'], ['Numbering', 'M2 1v3M5 2h7M2 5v3M5 6h7M2 9v3M5 10h7']]
        ];
        document.getElementById('paragraph').innerHTML = paragraph.map(group =>
            `<div class="h-[15px] flex divide-x divide-[#b9cbe8] border border-[#a9c0e4] bg-linear-to-b from-[#d3e1f5] to-[#bccfeb]">${group.map(([name, d]) =>
                `<button aria-label="${name}" class="flex-1"><svg class="w-[13px] h-[12px]" viewBox="0 0 13 12"><path d="${d}" fill="none" stroke="#7d8ba5"/></svg></button>`).join('')}</div>`).join('');

        // tree: [level, icon, label, expander]
        const f = (...names) => names.map(n => [2, 'field', n]);
        const nodes = [
            [0, 'folder', 'Built-in Fields', '+'], [0, 'open', 'Parameters', '-'],
            [1, 'param', 'doctorid'], [1, 'param', 'bp'], [1, 'param', 'po'], [1, 'param', 'ProductType'],
            [0, 'folder', 'Images'], [0, 'folder', 'Data Sources', '+'], [0, 'open', 'Datasets', '-'],
            [1, 'set', 'DataSet1', '-'],
            ...f('CaseID', 'DoctorID', 'invoicenotes', 'PatientFirst', 'PatientLast', 'DateInvoiced', 'UnitPrice', 'Quantity', 'fee', 'ProductID', 'TicketDescription',
                'ProductTypeID', 'PatientInitials', 'DueDate', 'AssociateDoctorID', 'AssociateName', 'billperiod', 'TotalCharge', 'FullCharge', 'Disc', 'ID'),
            [1, 'set', 'DataSet2', '-'], ...f('accountnumber'),
            [1, 'set', 'DataSet4', '-'], ...f('BillPeriod', 'bpnice'),
            [1, 'set', 'DataSet5', '-'], ...f('ID'),
            [1, 'set', 'defaultBP', '-'], ...f('BillPeriod'),
            [1, 'set', 'Products', '-'], ...f('ProductTypeID')
        ];
        const lead = ['w-[8px]', 'w-[21px]', 'w-[34px]'];
        const gx = [1, 14, 27];
        const line = (x1, y1, x2, y2) => `<line x1="${x1}" y1="${y1}" x2="${x2}" y2="${y2}" stroke="#b4b4b4" stroke-dasharray="1 1"/>`;
        const more = (i, level) => {
            for (let k = i + 1; k < nodes.length; k++) {
                if (nodes[k][0] === level) return true;
                if (nodes[k][0] < level) return false;
            }
            return false;
        };
        document.getElementById('tree').innerHTML = nodes.map(([level, icon, label, box], i) => {
            let art = '';
            for (let l = 0; l < level; l++) if (more(i, l)) art += line(gx[l] + .5, '0', gx[l] + .5, '100%');
            const x = gx[level] + .5;
            art += line(x, '0', x, more(i, level) ? '100%' : '50%') + line(x, '50%', x + 7, '50%');
            if (box) {
                art += `<svg y="50%" class="overflow-visible"><rect x="${x - 4}" y="-4" width="8" height="8" fill="#f4f4f4" stroke="#a5a5a5"/><path d="M${x - 2} 0h4${box === '+' ? `M${x} -2v4` : ''}" stroke="#4b63a8"/></svg>`;
            }
            return `<li class="flex items-center"><svg class="${lead[level]} h-full shrink-0 overflow-visible">${art}</svg><svg class="w-[11px] h-[10px] shrink-0"><use href="#i-${icon}"/></svg><span class="ml-[2px] px-px leading-[17px] ${label === 'Products' ? 'bg-[#f0f0f0]' : ''}">${label}</span></li>`;
        }).join('');

        // row groups, each one step further in
        document.getElementById('groups').innerHTML = ['CaseID', '(PatientFirst1)', 'DateInvoiced', '(DateInvoiced1)', 'ID', '(DueDate)', '(AssociateDoctorID)', 'AssociateName'].map((name, i) =>
            `<li class="flex min-h-0 border border-b-2 border-[#ffd9a0] bg-linear-to-b from-[#fffaf0] to-[#ffe7ab]" style="margin-left:${Math.round(i * 16 / 3)}px"><svg class="w-[5px] h-[7px] ml-[2px] mt-[2px]" viewBox="0 0 5 7"><path d="M4 1H1.500v5H4" fill="none" stroke="#666"/></svg><span class="flex-1 ml-px pt-px">${name}</span><button aria-label="${name} options" class="w-[13px] flex justify-center pt-[4px] border-l border-[#ffd9a0]"><svg class="w-[5px] h-[3px]"><use href="#i-down"/></svg></button></li>`).join('');

        // rulers: 96px to the inch, a dot each eighth, a bar each half
        let h = '<path d="M-5.500 -2v27" stroke="#333"/>';
        for (let i = 1; i * 12 < 2048; i++) {
            const x = i * 12;
            if (i % 8 === 0) h += `<text x="${x}" y="12" text-anchor="middle">${i / 8}</text>`;
            else h += i % 8 === 4 ? `<path d="M${x + .5} 3v4" stroke="#555"/>` : `<path d="M${x} 5h1" stroke="#555"/>`;
        }
        document.getElementById('hruler').innerHTML = h;
        let v = '<path d="M-3 22.500h22" stroke="#333"/>';
        for (let i = 1; i * 12 < 719; i++) {
            const y = i * 12;
            if (i % 8 === 0) v += `<text x="${-y}" y="11" text-anchor="middle" transform="rotate(-90)">${i / 8}</text>`;
            else v += i % 8 === 4 ? `<path d="M3 ${y + .5}h4" stroke="#555"/>` : `<path d="M4 ${y + .5}h2" stroke="#555"/>`;
        }
        document.getElementById('vruler').innerHTML = v;
    </script>
</body>
</html>
